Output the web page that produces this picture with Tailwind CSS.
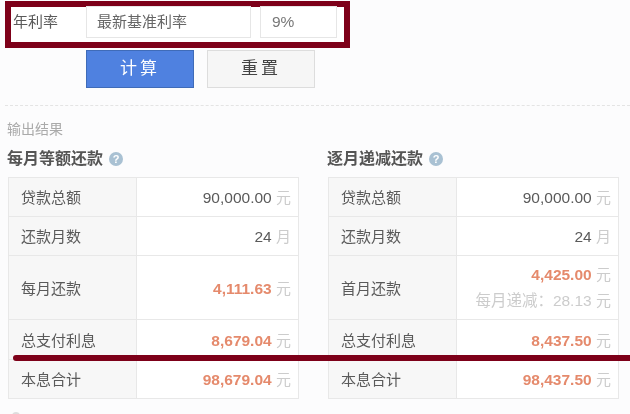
<!DOCTYPE html>
<html lang="zh">
<head>
  <meta charset="UTF-8">
  <title>贷款计算器</title>
  <script src="https://cdn.jsdelivr.net/npm/@tailwindcss/browser@4"></script>
</head>
<body class="bg-[#fcfcfd] text-[#5a5a5a] font-['Liberation_Sans','Noto_Sans_CJK_SC',sans-serif]">
  <div class="relative w-[630px] h-[414px] overflow-hidden blur-[0.35px]">
    <div class="ml-[5px] mt-px w-[345px] h-[47px] border-[6px] border-[#7d0019] bg-white flex items-start">
      <span class="w-[75px] pl-[2px] text-[15px] leading-[30px]">年利率</span>
      <div class="w-[165px] h-[32px] -mt-px border border-[#e6e6e6] bg-white pl-[10px] text-[15px] leading-[30px] text-[#666]">最新基准利率</div>
      <div class="ml-[9px] w-[77px] h-[32px] -mt-px border border-[#e6e6e6] bg-white pl-[11px] text-[15.5px] leading-[30px] text-[#777]">9%</div>
    </div>
    <div class="ml-[86px] mt-[2px] flex gap-[13px]">
      <button class="w-[108px] h-[38px] bg-[#4f81e0] border border-[#3f6bb8] text-white text-[17px] tracking-[3px]">计算</button>
      <button class="w-[108px] h-[38px] bg-[#f6f6f6] border border-[#ddd] text-[#444] text-[17px] tracking-[3px]">重置</button>
    </div>
    <div class="ml-[5px] mt-[17px] border-t border-dashed border-[#e4e4e4]"></div>
    <div class="ml-[7px] mt-[13px] text-sm leading-[20px] text-[#aaa]">输出结果</div>
    <div class="ml-[8px] mt-[10px] flex gap-[29px]">
      <section class="w-[291px]">
        <h3 class="flex items-center gap-[6px] -ml-px text-base leading-[20px] font-bold text-[#555]">每月等额还款
          <span class="w-[14px] h-[14px] rounded-full bg-[#a9c1d3] text-white text-[11px] leading-[14px] text-center">?</span>
        </h3>
        <div class="mt-[8px] border border-[#e8e8e8] bg-white text-[15px]">
          <div class="flex h-[39px] border-b border-[#e8e8e8]">
            <div class="w-[128px] pl-[12px] leading-[40px] bg-[#f7f7f7] border-r border-[#e8e8e8]">贷款总额</div>
            <div class="flex-1 pr-[7px] leading-[40px] text-right text-[15.5px]">90,000.00 <span class="text-[15px] text-[#ccc]">元</span></div>
          </div>
          <div class="flex h-[39px] border-b border-[#e8e8e8]">
            <div class="w-[128px] pl-[12px] leading-[40px] bg-[#f7f7f7] border-r border-[#e8e8e8]">还款月数</div>
            <div class="flex-1 pr-[7px] leading-[40px] text-right text-[15.5px]">24 <span class="text-[15px] text-[#ccc]">月</span></div>
          </div>
          <div class="flex h-[64px] border-b border-[#e8e8e8]">
            <div class="w-[128px] pl-[12px] leading-[65px] bg-[#f7f7f7] border-r border-[#e8e8e8]">每月还款</div>
            <div class="flex-1 pr-[7px] leading-[65px] text-right text-[15.5px]"><b class="text-[#e58a6c]">4,111.63</b> <span class="text-[15px] text-[#ccc]">元</span></div>
          </div>
          <div class="flex h-[40px] border-b border-[#e8e8e8]">
            <div class="w-[128px] pl-[12px] leading-[42px] bg-[#f7f7f7] border-r border-[#e8e8e8]">总支付利息</div>
            <div class="flex-1 pr-[7px] leading-[42px] text-right text-[15.5px]"><b class="text-[#e58a6c]">8,679.04</b> <span class="text-[15px] text-[#ccc]">元</span></div>
          </div>
          <div class="flex h-[38px]">
            <div class="w-[128px] pl-[12px] leading-[40px] bg-[#f7f7f7] border-r border-[#e8e8e8]">本息合计</div>
            <div class="flex-1 pr-[7px] leading-[40px] text-right text-[15.5px]"><b class="text-[#e58a6c]">98,679.04</b> <span class="text-[15px] text-[#ccc]">元</span></div>
          </div>
        </div>
      </section>
      <section class="w-[291px]">
        <h3 class="flex items-center gap-[6px] -ml-px text-base leading-[20px] font-bold text-[#555]">逐月递减还款
          <span class="w-[14px] h-[14px] rounded-full bg-[#a9c1d3] text-white text-[11px] leading-[14px] text-center">?</span>
        </h3>
        <div class="mt-[8px] border border-[#e8e8e8] bg-white text-[15px]">
          <div class="flex h-[39px] border-b border-[#e8e8e8]">
            <div class="w-[128px] pl-[12px] leading-[40px] bg-[#f7f7f7] border-r border-[#e8e8e8]">贷款总额</div>
            <div class="flex-1 pr-[7px] leading-[40px] text-right text-[15.5px]">90,000.00 <span class="text-[15px] text-[#ccc]">元</span></div>
          </div>
          <div class="flex h-[39px] border-b border-[#e8e8e8]">
            <div class="w-[128px] pl-[12px] leading-[40px] bg-[#f7f7f7] border-r border-[#e8e8e8]">还款月数</div>
            <div class="flex-1 pr-[7px] leading-[40px] text-right text-[15.5px]">24 <span class="text-[15px] text-[#ccc]">月</span></div>
          </div>
          <div class="flex h-[64px] border-b border-[#e8e8e8]">
            <div class="w-[128px] pl-[12px] leading-[65px] bg-[#f7f7f7] border-r border-[#e8e8e8]">首月还款</div>
            <div class="flex-1 pr-[7px] pt-[6px] text-right text-[15.5px]">
              <div class="leading-[26px]"><b class="text-[#e58a6c]">4,425.00</b> <span class="text-[15px] text-[#ccc]">元</span></div>
              <div class="leading-[26px] text-[#ccc]">每月递减：28.13 <span class="text-[15px]">元</span></div>
            </div>
          </div>
          <div class="flex h-[40px] border-b border-[#e8e8e8]">
            <div class="w-[128px] pl-[12px] leading-[42px] bg-[#f7f7f7] border-r border-[#e8e8e8]">总支付利息</div>
            <div class="flex-1 pr-[7px] leading-[42px] text-right text-[15.5px]"><b class="text-[#e58a6c]">8,437.50</b> <span class="text-[15px] text-[#ccc]">元</span></div>
          </div>
          <div class="flex h-[38px]">
            <div class="w-[128px] pl-[12px] leading-[40px] bg-[#f7f7f7] border-r border-[#e8e8e8]">本息合计</div>
            <div class="flex-1 pr-[7px] leading-[40px] text-right text-[15.5px]"><b class="text-[#e58a6c]">98,437.50</b> <span class="text-[15px] text-[#ccc]">元</span></div>
          </div>
        </div>
      </section>
    </div>
    <!-- hand-drawn annotation line over the table -->
    <div class="absolute left-[13px] top-[355px] w-[617px] h-[6px] rounded-l-full bg-[#7d0019]"></div>
    <div class="absolute left-[12px] top-[412px] w-[8px] h-[8px] rounded-full bg-[#ddd]"></div>
  </div>
</body>
</html>
